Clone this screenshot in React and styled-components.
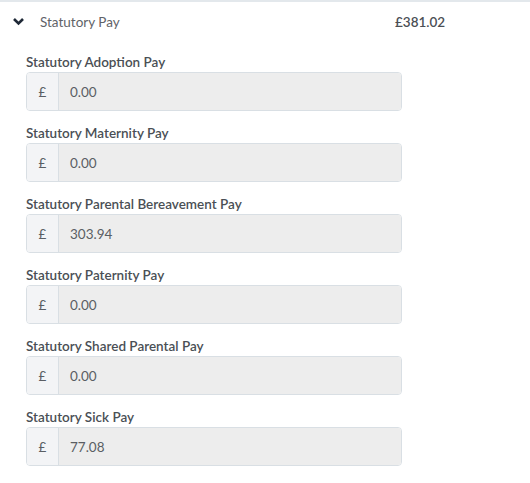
import React from "react";
import styled, { createGlobalStyle } from "styled-components";

const Global = createGlobalStyle`
  body {
    margin: 0;
    background: #fff;
    font-family: Lato, "Liberation Sans", sans-serif;
  }
`;

const Section = styled.section`
  width: 530px;
  border-top: 2px solid #e3e8ec;
`;

const Header = styled.div`
  display: flex;
  align-items: center;
  height: 40px;
  padding-left: 12px;
  .chev {
    width: 13px;
    height: 9px;
    margin-right: 15px;
    margin-top: -1px;
  }
  .title {
    font-size: 13.5px;
    color: #5f6368;
    width: 355px;
  }
  .total {
    font-size: 13.5px;
    font-weight: 600;
    color: #4b4f55;
  }
`;

const Fields = styled.div`
  display: flex;
  flex-direction: column;
  gap: 14px;
  padding: 12px 0 0 26px;
`;

const Field = styled.div`
  display: flex;
  flex-direction: column;
  gap: 2px;
`;

const Label = styled.label`
  font-size: 13.5px;
  font-weight: 600;
  color: #4a4f55;
  line-height: 16px;
`;

const InputBox = styled.div`
  display: flex;
  width: 376px;
  height: 39px;
  box-sizing: border-box;
  border: 1px solid #d9dfe4;
  border-radius: 4px;
  overflow: hidden;
  font-size: 13.5px;
  color: #5a5e63;
`;

const Prefix = styled.span`
  width: 31px;
  display: flex;
  align-items: center;
  justify-content: center;
  background: #f3f4f6;
  border-right: 1px solid #d9dfe4;
`;

const Value = styled.span`
  flex: 1;
  display: flex;
  align-items: center;
  padding-left: 11px;
  background: #ededed;
`;

const items = [
  ["Statutory Adoption Pay", "0.00"],
  ["Statutory Maternity Pay", "0.00"],
  ["Statutory Parental Bereavement Pay", "303.94"],
  ["Statutory Paternity Pay", "0.00"],
  ["Statutory Shared Parental Pay", "0.00"],
  ["Statutory Sick Pay", "77.08"],
];

export default function App() {
  return (
    <>
      <Global />
      <Section>
        <Header>
          <svg className="chev" viewBox="0 0 13 9">
            <path d="M2 2 L6.5 6.5 L11 2" fill="none" stroke="#1f2937" strokeWidth="2.6" />
          </svg>
          <span className="title">Statutory Pay</span>
          <span className="total">£381.02</span>
        </Header>
        <Fields>
          {items.map(([label, val]) => (
            <Field key={label}>
              <Label>{label}</Label>
              <InputBox>
                <Prefix>£</Prefix>
                <Value>{val}</Value>
              </InputBox>
            </Field>
          ))}
        </Fields>
      </Section>
    </>
  );
}
